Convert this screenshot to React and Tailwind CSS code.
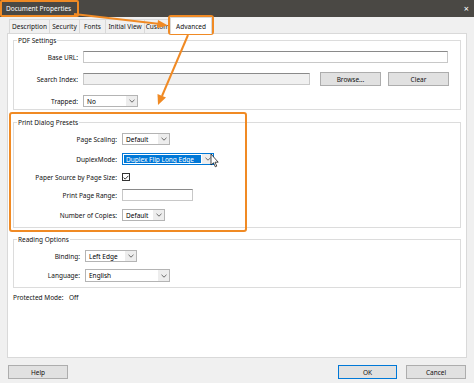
import React from "react";

const ORANGE = "#f08a24";

function Chevron() {
  return (
    <svg width="6" height="4" viewBox="0 0 6 4" className="block">
      <polyline points="0.5,0.8 3,3.2 5.5,0.8" fill="none" stroke="#5a5a5a" strokeWidth="0.9" />
    </svg>
  );
}

function Select({ className, value, selected }) {
  return (
    <div
      className={`flex h-[12px] border bg-white ${selected ? "border-[#0078d7]" : "border-[#b4b4b4]"} ${className}`}
    >
      <div className="flex flex-1 items-center pl-[1px] pr-[1px] py-[1px]">
        <span
          className={`flex h-full items-center px-[2px] ${selected ? "flex-1 bg-[#0078d7] text-white" : "text-black"}`}
        >
          {value}
        </span>
      </div>
      <div className="flex w-[11px] items-center justify-center bg-[#ededed]">
        <Chevron />
      </div>
    </div>
  );
}

function Input({ className, disabled }) {
  return (
    <div
      className={`h-[12px] border border-[#c8c8c8] border-t-[#8a8a8a] ${disabled ? "bg-[#f0f0f0]" : "bg-white"} ${className}`}
    />
  );
}

function Button({ children, className, primary }) {
  return (
    <div
      className={`flex h-[14px] items-center justify-center border bg-[#e1e1e1] ${primary ? "border-[#0078d7]" : "border-[#adadad]"} ${className}`}
    >
      {children}
    </div>
  );
}

function Row({ label, labelW, children, className }) {
  return (
    <div className={`flex items-center ${className || ""}`}>
      <span className={`text-right ${labelW}`}>{label}</span>
      <div className="ml-[5px] flex items-center">{children}</div>
    </div>
  );
}

export default function App() {
  return (
    <div
      className="relative h-[383px] w-[474px] overflow-hidden bg-[#f0f0f0] text-[6.5px] leading-[9px] text-[#111]"
      style={{ fontFamily: '"Noto Sans", "Open Sans", sans-serif' }}
    >
      {/* title bar */}
      <div className="flex h-[17px] items-center justify-between bg-[#4a4844] pr-[5px]">
        <span className="flex h-[17px] items-center rounded-[2px] border-2 border-[#f08a24] pl-[4px] pr-[6px] text-white">
          Document Properties
        </span>
        <span className="text-[9px] text-white">×</span>
      </div>

      {/* tabs */}
      <div className="flex h-[16px] items-end pl-[9px]">
        <div className="flex h-[14px] w-[40px] items-center justify-center border-l border-t border-[#d9d9d9]">Description</div>
        <div className="flex h-[14px] w-[30px] items-center justify-center border-l border-t border-[#d9d9d9]">Security</div>
        <div className="flex h-[14px] w-[26px] items-center justify-center border-l border-t border-[#d9d9d9]">Fonts</div>
        <div className="flex h-[14px] w-[39px] items-center justify-center border-l border-t border-[#d9d9d9]">Initial View</div>
        <div className="flex h-[14px] w-[26px] items-center justify-center border-l border-t border-[#d9d9d9]">Custom</div>
        <div className="relative z-10 -mb-[1px] flex h-[17px] w-[42px] items-center justify-center border-x border-t border-[#d9d9d9] bg-white">
          Advanced
        </div>
      </div>

      {/* panel */}
      <div className="mx-[7px] h-[325px] border border-[#d9d9d9] bg-white px-[5px]">
        <fieldset className="mt-[2px] border border-[#dcdcdc] px-0 pb-[2px]">
          <legend className="ml-[3px] px-[1px]">PDF Settings</legend>
          <div className="pt-[6px]">
            <Row label="Base URL:" labelW="w-[64px]">
              <Input className="w-[365px]" />
            </Row>
            <Row label="Search Index:" labelW="w-[64px]" className="mt-[9px]">
              <Input className="w-[227px]" disabled />
              <Button className="ml-[10px] w-[61px]">Browse...</Button>
              <Button className="ml-[7px] w-[61px]">Clear</Button>
            </Row>
            <Row label="Trapped:" labelW="w-[64px]" className="mt-[9px]">
              <Select className="w-[55px]" value="No" />
            </Row>
          </div>
        </fieldset>

        <fieldset className="mt-[8px] border border-[#dcdcdc] px-0 pb-[6px]">
          <legend className="ml-[3px] px-[1px]">Print Dialog Presets</legend>
          <div className="pt-[6px]">
            <Row label="Page Scaling:" labelW="w-[103px]">
              <Select className="w-[48px]" value="Default" />
            </Row>
            <Row label="DuplexMode:" labelW="w-[103px]" className="mt-[8px]">
              <Select className="w-[92px]" value="Duplex Flip Long Edge" selected />
            </Row>
            <Row label="Paper Source by Page Size:" labelW="w-[103px]" className="mt-[6px] h-[12px]">
              <div className="flex h-[8px] w-[8px] items-center justify-center border border-[#333]">
                <svg width="6" height="5" viewBox="0 0 6 5" className="block">
                  <polyline points="0.6,2.6 2.2,4.1 5.4,0.8" fill="none" stroke="#222" strokeWidth="0.9" />
                </svg>
              </div>
            </Row>
            <Row label="Print Page Range:" labelW="w-[103px]" className="mt-[6px]">
              <Input className="w-[71px]" />
            </Row>
            <Row label="Number of Copies:" labelW="w-[103px]" className="mt-[8px]">
              <Select className="w-[43px]" value="Default" />
            </Row>
          </div>
        </fieldset>

        <fieldset className="mt-[7px] border border-[#dcdcdc] px-0 pb-[5px]">
          <legend className="ml-[3px] px-[1px]">Reading Options</legend>
          <div className="pt-[6px]">
            <Row label="Binding:" labelW="w-[66px]">
              <Select className="w-[52px]" value="Left Edge" />
            </Row>
            <Row label="Language:" labelW="w-[66px]" className="mt-[7px]">
              <Select className="h-[13px] w-[85px]" value="English" />
            </Row>
          </div>
        </fieldset>

        <div className="mt-[5px] flex pl-[0px]">
          <span className="w-[56px]">Protected Mode:</span>
          <span>Off</span>
        </div>
      </div>

      {/* bottom buttons */}
      <div className="mt-[7px] flex items-center pl-[8px]">
        <Button className="w-[60px]">Help</Button>
        <div className="flex-1" />
        <Button className="w-[59px]" primary>OK</Button>
        <Button className="ml-[9px] mr-[8px] w-[60px]">Cancel</Button>
      </div>

      {/* orange highlight overlays */}
      <div className="pointer-events-none absolute left-[168px] top-[15px] h-[20px] w-[46px] rounded-[3px] border-2 border-[#f08a24]" />
      <div className="pointer-events-none absolute left-[9px] top-[112px] h-[120px] w-[238px] rounded-[3px] border-2 border-[#f08a24]" />

      <svg className="pointer-events-none absolute left-0 top-0" width="474" height="383">
        <line x1="74" y1="14" x2="160" y2="24" stroke={ORANGE} strokeWidth="2" />
        <polygon points="168,25.5 158,20 157,28" fill={ORANGE} />
        <line x1="188" y1="35" x2="162" y2="96" stroke={ORANGE} strokeWidth="2" />
        <polygon points="158,105 157.5,94 166,97.5" fill={ORANGE} />
        {/* mouse cursor */}
        <path
          d="M211 154 L211 165 L213.5 162.8 L215.3 166.8 L216.8 166.1 L215 162.2 L218.2 162.2 Z"
          fill="#fff"
          stroke="#000"
          strokeWidth="0.7"
          strokeLinejoin="round"
        />
      </svg>
    </div>
  );
}
